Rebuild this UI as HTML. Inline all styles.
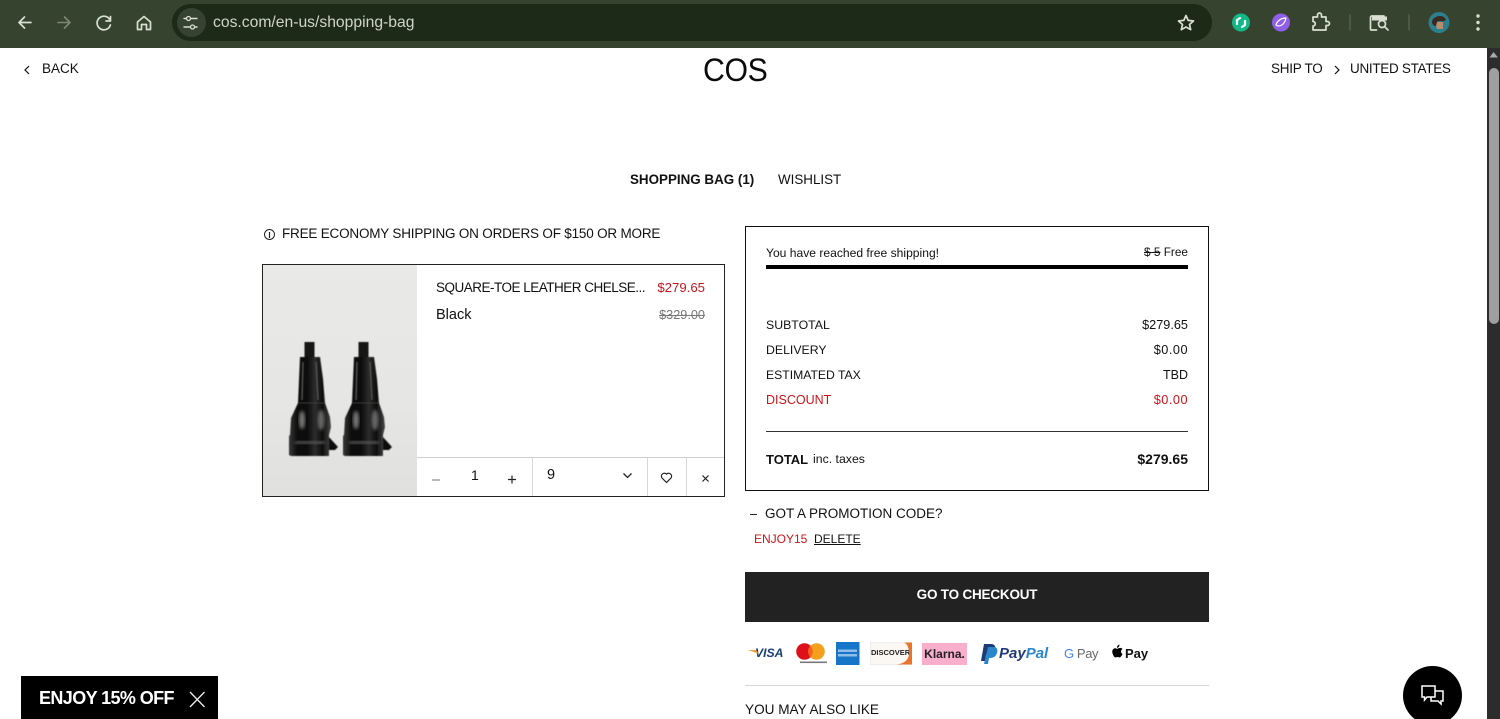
<!DOCTYPE html>
<html lang="en"><head><meta charset="utf-8"><title>COS Shopping Bag</title>
<style>
html,body{margin:0;padding:0;width:1500px;height:719px;overflow:hidden;background:#fff}
body{position:relative;font-family:"Liberation Sans",Arial,sans-serif;color:#111}
.t{position:absolute;white-space:nowrap;line-height:1;font-size:13.500px}
.r{position:absolute;white-space:nowrap;line-height:1;font-size:13px;text-align:right}
.b{position:absolute}
svg{position:absolute;overflow:visible}
</style></head><body>

<!-- browser bar -->
<div class="b" style="left:0;top:0;width:1500px;height:48px;background:#36432f"></div>
<div class="b" style="left:172px;top:4px;width:1040px;height:37px;border-radius:19px;background:#1d2a18"></div>
<div class="b" style="left:177px;top:8px;width:29px;height:29px;border-radius:50%;background:#364232"></div>
<svg style="left:0;top:0" width="1500" height="48" fill="none" stroke-linecap="round" stroke-linejoin="round">
 <g stroke="#d9dfd2" stroke-width="1.700">
  <path d="M31 22.500H19M24.500 17l-5.500 5.500 5.500 5.500"/>
  <path d="M110 20a6.800 6.800 0 1 0 .4 5M110.500 16.500v4.500h-4.500"/>
  <path d="M137.500 22l6.500-5.500 6.500 5.500v7.500h-4v-5h-5v5h-4z"/>
  <path d="M184 18.500h2M191 18.500h6M184 27h6M195 27h2" stroke-width="1.400"/>
  <circle cx="188.500" cy="18.500" r="2" stroke-width="1.300"/><circle cx="192.500" cy="27" r="2" stroke-width="1.300"/>
  <path d="M1186 15.500l2.200 4.900 5.300.6-4 3.500 1.200 5.200-4.700-2.700-4.700 2.700 1.200-5.200-4-3.500 5.300-.6z"/>
  <path d="M1313 17h4.500v-2a2 2 0 0 1 4 0v2h4.500v4.500h1.500a2 2 0 0 1 0 4h-1.500v4.500h-13v-4a2.200 2.200 0 0 0 0-4.500z"/>
  <path d="M1384 16h-12a1.500 1.500 0 0 0-1.500 1.500v11.500a1 1 0 0 0 1 1h5"/>
  <circle cx="1382" cy="24" r="3.500"/><path d="M1385 27l3 3"/>
 </g>
 <path d="M70 22.500H58M64.500 17l5.500 5.500-5.500 5.500" stroke="#7c8775" stroke-width="1.600"/>
 <path d="M1350 15v15M1409 15v15" stroke="#5c6855" stroke-width="1.200"/>
 <path d="M1372 16.500h15v4h-15z" fill="#d9dfd2" stroke="none"/>
 <circle cx="1241" cy="22.500" r="9" fill="#12b886"/>
 <path d="M1237 24v-4l3-2M1245 21v4l-3 2" stroke="#fff" stroke-width="2.200"/>
 <circle cx="1281" cy="22.500" r="9" fill="#8f5fe8"/>
 <path d="M1276 25c1-4 5-7 10-7-1 5-4 8-8 8z" stroke="#fff" stroke-width="1.200"/>
 <circle cx="1439" cy="22.500" r="10.500" fill="#2e7f8c"/>
 <path d="M1435 22h8v7h-6z" fill="#b98c6c" stroke="none"/>
 <path d="M1432 23c-1-7 12-10 14-3-2 1-3 2-5 1-2 0-3 0-4 1l-1 4c-2 0-3-1-4-3z" fill="#3a2a20" stroke="none"/>
 <circle cx="1478" cy="16" r="1.700" fill="#d9dfd2"/><circle cx="1478" cy="22.500" r="1.700" fill="#d9dfd2"/><circle cx="1478" cy="29" r="1.700" fill="#d9dfd2"/>
</svg>
<div class="t" style="left:213px;top:15px;font-size:15.700px;color:#cfd5c8">cos.com/en-us/shopping-bag</div>

<!-- scrollbar -->
<div class="b" style="left:1487px;top:48px;width:13px;height:671px;background:#2c2c2c"></div>
<div class="b" style="left:1489px;top:68px;width:10px;height:256px;border-radius:5px;background:#9f9f9f"></div>
<svg style="left:1487px;top:48px" width="13" height="16"><path d="M2.500 9.500L6.500 4l4.500 5.500z" fill="#a8a8a8"/></svg>

<!-- header -->
<svg style="left:0;top:48px" width="60" height="40" fill="none"><path d="M29 18l-4 4 4 4" stroke="#111" stroke-width="1.200"/></svg>
<div class="t" style="left:703px;top:54px;font-size:32px;letter-spacing:-.4px;color:#0b0b0b;transform:scaleX(.945);transform-origin:0 0">COS</div>
<div class="t" style="left:42px;top:61.500px;font-size:13.500px">BACK</div>
<div class="t" style="left:1271px;top:61.500px;font-size:13.500px;letter-spacing:-.25px">SHIP TO</div>
<svg style="left:1330px;top:60px" width="12" height="20" fill="none"><path d="M5 6l4 4-4 4" stroke="#111" stroke-width="1.200"/></svg>
<div class="t" style="left:1350px;top:61.500px;font-size:13.500px;letter-spacing:-.3px">UNITED STATES</div>

<div class="t" style="left:630px;top:172.500px;font-weight:bold;font-size:13.400px">SHOPPING BAG (1)</div>
<div class="t" style="left:778px;top:172.500px;font-size:13.400px">WISHLIST</div>

<!-- shipping notice -->
<svg style="left:263px;top:228px" width="14" height="14" fill="none" stroke="#222"><circle cx="6.500" cy="6.500" r="5"/><path d="M6.500 4v6" stroke-width="1.200"/></svg>
<div class="t" style="left:282px;top:226.500px;font-size:13.500px;letter-spacing:-.2px">FREE ECONOMY SHIPPING ON ORDERS OF $150 OR MORE</div>

<!-- product card -->
<div class="b" style="left:262px;top:264px;width:461px;height:231px;border:1px solid #222"></div>
<div class="b" style="left:263px;top:265px;width:154px;height:231px;background:linear-gradient(180deg,#e9e9e7 0%,#e6e6e4 60%,#e0e0de 100%)"></div>
<svg style="left:0;top:0" width="420" height="500">
 <defs>
  <filter id="bl"><feGaussianBlur stdDeviation=".6"/></filter>
  <filter id="bl2"><feGaussianBlur stdDeviation="1.500"/></filter>
  <linearGradient id="g" x1="0" x2="1" y1="0" y2="0"><stop offset="0" stop-color="#3a3a3a"/><stop offset=".18" stop-color="#111"/><stop offset=".42" stop-color="#0a0a0a"/><stop offset=".62" stop-color="#2c2c2c"/><stop offset=".8" stop-color="#0e0e0e"/><stop offset="1" stop-color="#4a4a4a"/></linearGradient>
  <g id="boot">
   <g filter="url(#bl)">
    <rect x="304.500" y="342" width="10" height="16" fill="#151515"/>
    <path d="M338 447l-3 3h-6l-4-8 3-6z" fill="#111"/>
    <path d="M300 357h20l3 22 2 24 5 14 1 10-2 8v21H291l-2-1v-19l1-1 1-17 7-15z" fill="url(#g)"/>
   </g>
   <path d="M303 362l-1 38M316 362l2 38" stroke="#555" stroke-width="1.400" filter="url(#bl)"/>
   <ellipse cx="302" cy="420" rx="3" ry="9" fill="#777" filter="url(#bl2)"/>
   <ellipse cx="321" cy="420" rx="3.500" ry="10" fill="#666" filter="url(#bl2)"/>
   <rect x="295" y="441" width="30" height="3" fill="#555" filter="url(#bl2)"/>
   <path d="M290 435h38" stroke="#777" stroke-width=".8" filter="url(#bl)"/>
   <path d="M299 403h25" stroke="#444" stroke-width=".8"/>
  </g>
 </defs>
 <use href="#boot"/><use href="#boot" x="54"/>
</svg>

<div class="t" style="left:436px;top:281px;font-size:13.500px;letter-spacing:-.5px">SQUARE-TOE LEATHER CHELSE...</div>
<div class="r" style="right:795px;top:280.500px;font-size:13.200px;color:#c4161c">$279.65</div>
<div class="t" style="left:436px;top:307.500px;font-size:14.500px">Black</div>
<div class="r" style="right:795px;top:308.500px;font-size:12.700px;color:#777;text-decoration:line-through">$329.00</div>

<div class="b" style="left:417px;top:457px;width:307px;height:1px;background:#cfcfcf"></div>
<div class="b" style="left:532px;top:457px;width:1px;height:39px;background:#d8d8d8"></div>
<div class="b" style="left:647px;top:457px;width:1px;height:39px;background:#d8d8d8"></div>
<div class="b" style="left:686px;top:457px;width:1px;height:39px;background:#d8d8d8"></div>
<div class="t" style="left:471px;top:468px;font-size:14px">1</div>
<div class="t" style="left:547px;top:467.500px;font-size:14.500px">9</div>
<svg style="left:417px;top:457px" width="307" height="39" fill="none" stroke="#222">
 <path d="M15 23h8" stroke="#777"/>
 <path d="M91 22.500h8M95 18.500v8" stroke-width="1.200"/>
 <path d="M206.500 16.500l4 4 4-4" stroke-width="1.300"/>
 <path d="M249.500 25.500l-4.600-4.600a3 3 0 0 1 4.600-3.800 3 3 0 0 1 4.600 3.800z" stroke-width="1.200"/>
 <path d="M285.500 18.500l6 6M291.500 18.500l-6 6" stroke-width="1.200"/>
</svg>

<!-- summary -->
<div class="b" style="left:745px;top:226px;width:462px;height:263px;border:1px solid #111"></div>
<div class="t" style="left:766px;top:246.500px;font-size:12.100px">You have reached free shipping!</div>
<div class="r" style="right:312px;top:246.500px;font-size:11.800px"><s>$ 5</s> Free</div>
<div class="b" style="left:766px;top:265px;width:422px;height:4px;background:#000"></div>

<div class="t" style="left:766px;top:319px;font-size:12.300px">SUBTOTAL</div>
<div class="r" style="right:312px;top:319px;font-size:12.700px">$279.65</div>
<div class="t" style="left:766px;top:344px;font-size:12.300px">DELIVERY</div>
<div class="r" style="right:312px;top:344px;font-size:12.700px;letter-spacing:.5px">$0.00</div>
<div class="t" style="left:766px;top:368.500px;font-size:12.200px">ESTIMATED TAX</div>
<div class="r" style="right:312px;top:368.500px;font-size:12.500px">TBD</div>
<div class="t" style="left:766px;top:393.500px;font-size:12.500px;color:#cc1419">DISCOUNT</div>
<div class="r" style="right:312px;top:393.500px;font-size:12.700px;letter-spacing:.5px;color:#cc1419">$0.00</div>
<div class="b" style="left:766px;top:431px;width:422px;height:1px;background:#333"></div>
<div class="t" style="left:766px;top:452.500px;font-weight:bold;font-size:13px">TOTAL</div>
<div class="t" style="left:813px;top:453px;font-size:12.300px">inc. taxes</div>
<div class="r" style="right:312px;top:452px;font-weight:bold;font-size:14px">$279.65</div>

<div class="b" style="left:750px;top:514px;width:7px;height:1px;background:#222"></div>
<div class="t" style="left:765px;top:507px;font-size:13.500px">GOT A PROMOTION CODE?</div>
<div class="t" style="left:754px;top:533px;font-size:12px;color:#cc1419">ENJOY15</div>
<div class="t" style="left:814px;top:533px;font-size:12px;text-decoration:underline">DELETE</div>

<div class="b" style="left:745px;top:572px;width:464px;height:50px;background:#222"></div>
<div class="t" style="left:745px;width:464px;top:587.500px;text-align:center;color:#fff;font-weight:bold;font-size:13.500px;letter-spacing:-.2px">GO TO CHECKOUT</div>

<!-- payment -->
<div class="t" style="left:755px;top:647px;font-size:12.200px;font-weight:bold;font-style:italic;color:#1a3f7a">VISA</div>
<svg style="left:745px;top:640px" width="420" height="30">
 <path d="M3 10h8l3 4z" fill="#e8a33d"/>
 <circle cx="59.500" cy="11.500" r="8.300" fill="#e0101a"/><circle cx="71.500" cy="11.500" r="8.300" fill="#f5a01d"/>
 <path d="M65.500 5.800a8.300 8.300 0 0 1 0 11.400 8.300 8.300 0 0 1 0-11.400z" fill="#f2641c"/>
 <rect x="55" y="21.500" width="27" height="1.600" fill="#777"/>
 <rect x="91" y="2" width="23.500" height="23" fill="#1675c9"/>
 <rect x="93" y="9.500" width="19" height="2.500" fill="#8fbfe8"/><rect x="93" y="14" width="19" height="2.500" fill="#8fbfe8"/>
 <rect x="125.500" y="2.500" width="41" height="22" fill="#fbf7f3" stroke="#eee"/>
 <path d="M150 24.500c9 0 14-5 14-11s-2-10-5-11h8v22z" fill="#e8742c"/>
 <rect x="177" y="3" width="45" height="22" fill="#f9aecb"/>
 <path d="M239 4h7c4 0 5 3 4 6-1 4-4 5-7 5h-2l-1 6h-4z" fill="#1f3a75"/>
 <path d="M243 7h6c3 0 4 3 3 6-1 3-3 5-7 5h-1l-1 6h-4z" fill="#2a87cc"/>
 <path d="M372 9c-1-1-3-1-3.500 0-2 1-1.500 5 1 8 1 1 1.500 0 3 0s2 1 3 0c1-1 1.500-2 2-3-2-1-2-4 0-5-1-1.500-3-1.500-5.500 0zM372 8c0-2 1-3 2.500-3.500 0 2-1 3-2.500 3.500z" fill="#000"/>
</svg>
<div class="b" style="left:871px;top:647px;width:38px;height:12px;overflow:hidden;color:#222;font-size:7.500px;font-weight:bold;line-height:12px;text-align:center;white-space:nowrap">DISCOVER</div>
<div class="t" style="left:922px;top:647.500px;width:45px;text-align:center;font-size:12px;font-weight:bold;color:#222">Klarna.</div>
<div class="t" style="left:999px;top:646px;font-size:15px;font-weight:bold;font-style:italic;color:#223a78">Pay<span style="color:#2a87cc">Pal</span></div>
<div class="t" style="left:1064px;top:646.500px;font-size:13px;letter-spacing:-.4px;color:#666"><span style="color:#4285f4">G</span> Pay</div>
<div class="t" style="left:1125px;top:646.500px;font-size:13px;font-weight:bold;color:#111">Pay</div>

<div class="b" style="left:745px;top:685px;width:464px;height:1px;background:#d6d6d6"></div>
<div class="t" style="left:745px;top:703px;font-size:13.600px">YOU MAY ALSO LIKE</div>

<!-- promo -->
<div class="b" style="left:21px;top:676px;width:197px;height:43px;background:#000"></div>
<div class="t" style="left:39px;top:688.500px;font-size:18px;font-weight:bold;color:#fff;letter-spacing:-.6px">ENJOY 15% OFF</div>
<svg style="left:190px;top:692px" width="15" height="15" fill="none" stroke="#eee" stroke-width="1.300"><path d="M0 0l14.500 15M14.500 0L0 15"/></svg>

<!-- chat -->
<div class="b" style="left:1403px;top:666px;width:59px;height:59px;border-radius:50%;background:#000"></div>
<svg style="left:1420px;top:684px" width="26" height="24" fill="none" stroke="#fff" stroke-width="1.500"><path d="M2 2h13v11H7l-2.500 3V13H2zM15 7h8v10h-2v3l-3-3h-7v-3.500"/></svg>

</body></html>
